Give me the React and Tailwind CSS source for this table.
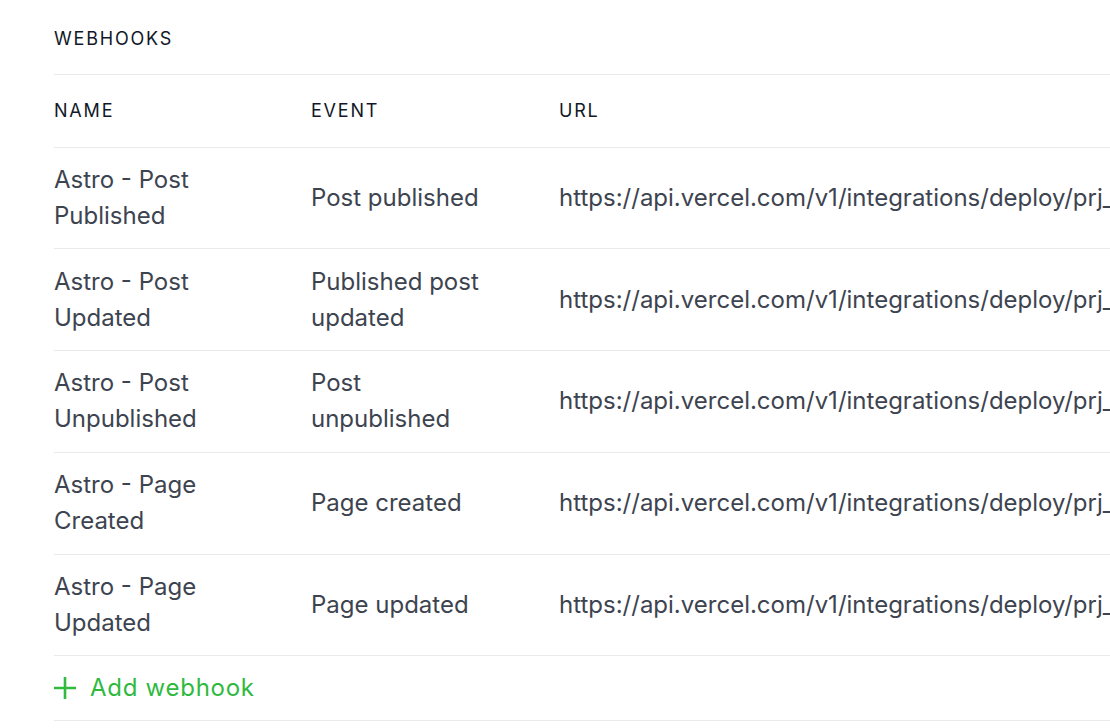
const ROWS = [
  { name: ['Astro - Post', 'Published'], event: ['Post published'] },
  { name: ['Astro - Post', 'Updated'], event: ['Published post', 'updated'] },
  { name: ['Astro - Post', 'Unpublished'], event: ['Post', 'unpublished'] },
  { name: ['Astro - Page', 'Created'], event: ['Page created'] },
  { name: ['Astro - Page', 'Updated'], event: ['Page updated'] },
]

const URL = 'https://api.vercel.com/v1/integrations/deploy/prj_'

function Lines({ lines }) {
  return lines.map((l) => (
    <div key={l} className="whitespace-nowrap">
      {l}
    </div>
  ))
}

export default function App() {
  return (
    <div className="w-[1110px] h-[728px] overflow-hidden bg-white pl-[54px] font-['Inter',sans-serif]">
      <div className="w-[1200px]">
        <h2 className="h-[75px] pt-[26px] text-[18px] leading-[26px] tracking-[0.1em] text-[#111827] border-b border-[#e8eaed]">
          WEBHOOKS
        </h2>
        <table className="w-full border-collapse text-left">
          <thead>
            <tr className="h-[72px] border-b border-[#e8eaed]">
              <th className="w-[257px] p-0 font-normal text-[18px] tracking-[0.1em] text-[#111827]">NAME</th>
              <th className="w-[248px] p-0 font-normal text-[18px] tracking-[0.1em] text-[#111827]">EVENT</th>
              <th className="p-0 font-normal text-[18px] tracking-[0.1em] text-[#111827]">URL</th>
            </tr>
          </thead>
          <tbody className="text-[24px] leading-[36px] text-[#3d4450]">
            {ROWS.map((r) => (
              <tr key={r.name.join(' ') + r.event[0]} className="h-[101.8px] border-b border-[#e8eaed]">
                <td className="p-0 align-middle">
                  <Lines lines={r.name} />
                </td>
                <td className="p-0 align-middle">
                  <Lines lines={r.event} />
                </td>
                <td className="p-0 align-middle whitespace-nowrap">{URL}</td>
              </tr>
            ))}
          </tbody>
        </table>
        <button
          type="button"
          className="flex items-center gap-[14px] h-[65px] w-full border-b border-[#e8eaed] text-[24px] tracking-[0.03em] text-[#2fba3f]"
        >
          <svg width="22" height="22" viewBox="0 0 22 22" fill="none" stroke="currentColor" strokeWidth="2.6">
            <path d="M11 0v22M0 11h22" />
          </svg>
          Add webhook
        </button>
      </div>
    </div>
  )
}
